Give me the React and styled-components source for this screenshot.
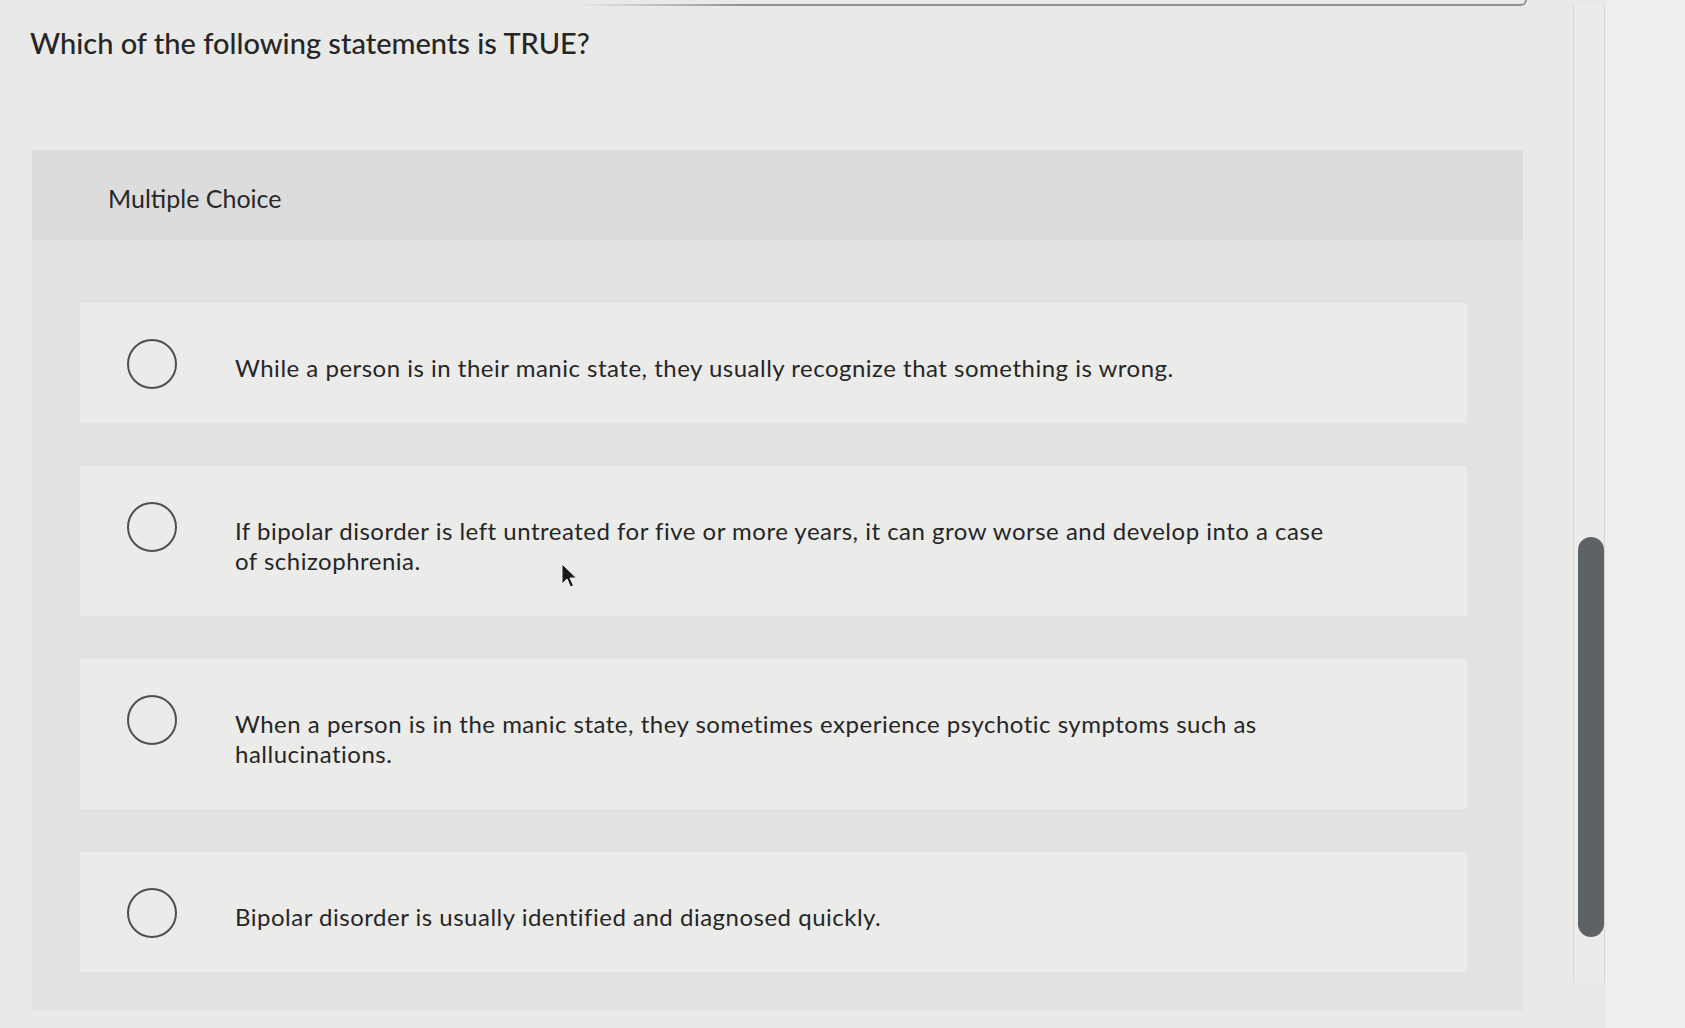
import React from 'react';
import styled, { createGlobalStyle } from 'styled-components';

const GlobalStyle = createGlobalStyle`
  html, body {
    margin: 0;
    padding: 0;
    background: #e9e9e8;
  }
  body {
    font-family: Lato, "Open Sans", "Liberation Sans", sans-serif;
    color: #2c2c2c;
  }
`;

const Page = styled.div`
  position: relative;
  display: flex;
  width: 1685px;
  height: 1028px;
  overflow: hidden;
  background: #e9e9e8;
`;

const Main = styled.div`
  flex: 0 0 1573px;
  display: flex;
  flex-direction: column;
`;

const TopEdge = styled.div`
  height: 4px;
  margin-left: 580px;
  width: 945px;
  border-bottom: 2px solid #8d8d8d;
  border-right: 2px solid #8d8d8d;
  border-bottom-right-radius: 8px;
  -webkit-mask-image: linear-gradient(90deg, transparent 0%, #000 18%);
`;

const Title = styled.h1`
  margin: 0;
  padding: 18px 0 0 30px;
  font-size: 29px;
  line-height: 38px;
  font-weight: 500;
  color: #262626;
`;

const Panel = styled.section`
  margin: 88px 0 0 32px;
  width: 1491px;
  display: flex;
  flex-direction: column;
  background: #e2e2e2;
`;

const PanelHeader = styled.div`
  height: 90px;
  box-sizing: border-box;
  padding: 33px 0 0 76px;
  font-size: 25px;
  line-height: 30px;
  background: #dcdcdc;
  color: #282828;
`;

const OptionList = styled.div`
  display: flex;
  flex-direction: column;
  gap: 43px;
  padding: 63px 56px 38px 48px;
`;

const OptionCard = styled.label`
  display: flex;
  align-items: flex-start;
  gap: 58px;
  padding: 36px 40px 34px 47px;
  background: #ebebea;
  cursor: pointer;
`;

const Radio = styled.span`
  flex: 0 0 auto;
  width: 50px;
  height: 50px;
  box-sizing: border-box;
  border: 2px solid #4d5052;
  border-radius: 50%;
  background: transparent;
`;

const OptionText = styled.span`
  max-width: 1100px;
  margin: 14px 0 6px;
  font-size: 24px;
  letter-spacing: 0.5px;
  line-height: 30px;
  color: #262626;
`;

const ScrollTrack = styled.div`
  flex: 0 0 30px;
  box-sizing: border-box;
  margin: 5px 0 45px;
  border-left: 1px solid #d6d6d6;
  border-right: 1px solid #d6d6d6;
  background: #ebebeb;
  display: flex;
  justify-content: center;
  padding-top: 532px;
`;

const Thumb = styled.div`
  width: 26px;
  height: 400px;
  margin-left: 4px;
  border-radius: 13px;
  background: #5d6264;
`;

const Gutter = styled.div`
  flex: 1;
  background: #eeeeed;
`;

const Cursor = styled.svg`
  position: absolute;
  left: 560px;
  top: 563px;
  width: 18px;
  height: 26px;
`;

const options = [
  'While a person is in their manic state, they usually recognize that something is wrong.',
  'If bipolar disorder is left untreated for five or more years, it can grow worse and develop into a case of schizophrenia.',
  'When a person is in the manic state, they sometimes experience psychotic symptoms such as hallucinations.',
  'Bipolar disorder is usually identified and diagnosed quickly.',
];

export default function App() {
  return (
    <>
      <GlobalStyle />
      <Page>
        <Main>
          <TopEdge />
          <Title>Which of the following statements is TRUE?</Title>
          <Panel>
            <PanelHeader>Multiple Choice</PanelHeader>
            <OptionList>
              {options.map((text) => (
                <OptionCard key={text}>
                  <Radio />
                  <OptionText>{text}</OptionText>
                </OptionCard>
              ))}
            </OptionList>
          </Panel>
        </Main>
        <ScrollTrack>
          <Thumb />
        </ScrollTrack>
        <Gutter />
        <Cursor viewBox="0 0 18 26">
          <path d="M2 1 L2 21 L7 16 L10.5 24 L13.5 22.6 L10 15 L16.5 15 Z" fill="#1a1a1a" stroke="#f2f2f2" strokeWidth="1" />
        </Cursor>
      </Page>
    </>
  );
}
